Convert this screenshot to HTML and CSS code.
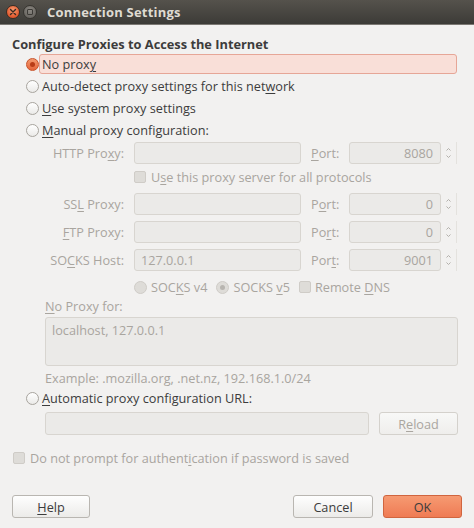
FILE: index.html
```html
<!DOCTYPE html>
<html>
<head>
<meta charset="utf-8">
<link rel="stylesheet" href="styles.css">
</head>
<body>
<div class="window">
  <div class="titlebar">
    <span class="wbtn close"><svg width="8" height="8" viewBox="0 0 8 8"><path d="M1.5 1.5L6.5 6.5M6.5 1.5L1.5 6.5" stroke="#3a2a22" stroke-width="1.4" stroke-linecap="round"/></svg></span>
    <span class="wbtn mini"><span class="mini-sq"></span></span>
    <span class="title">Connection Settings</span>
  </div>
  <div class="content">
    <div class="heading">Configure Proxies to Access the Internet</div>
    <div class="radio-row selected"><span class="radio checked"></span><span class="rlabel">No prox<u>y</u></span></div>
    <div class="radio-row"><span class="radio"></span><span class="rlabel">Auto-detect proxy settings for this net<u>w</u>ork</span></div>
    <div class="radio-row"><span class="radio"></span><span class="rlabel"><u>U</u>se system proxy settings</span></div>
    <div class="radio-row"><span class="radio"></span><span class="rlabel"><u>M</u>anual proxy configuration:</span></div>

    <div class="manual">
      <div class="prow">
        <span class="plabel">HTTP Pro<u>x</u>y:</span>
        <span class="field host"></span>
        <span class="portlabel"><u>P</u>ort:</span>
        <span class="field port">8080</span>
        <span class="spin"><svg width="7" height="16" viewBox="0 0 7 16"><path d="M1.5 5.5L3.5 3.5L5.5 5.5M1.5 10.5L3.5 12.5L5.5 10.5" fill="none" stroke="#b3b0ab" stroke-width="1"/></svg></span>
      </div>
      <div class="checkrow sub"><span class="check"></span><span>U<u>s</u>e this proxy server for all protocols</span></div>
      <div class="prow">
        <span class="plabel">SS<u>L</u> Proxy:</span>
        <span class="field host"></span>
        <span class="portlabel">P<u>o</u>rt:</span>
        <span class="field port">0</span>
        <span class="spin"><svg width="7" height="16" viewBox="0 0 7 16"><path d="M1.5 5.5L3.5 3.5L5.5 5.5M1.5 10.5L3.5 12.5L5.5 10.5" fill="none" stroke="#b3b0ab" stroke-width="1"/></svg></span>
      </div>
      <div class="prow">
        <span class="plabel"><u>F</u>TP Proxy:</span>
        <span class="field host"></span>
        <span class="portlabel">Po<u>r</u>t:</span>
        <span class="field port">0</span>
        <span class="spin"><svg width="7" height="16" viewBox="0 0 7 16"><path d="M1.5 5.5L3.5 3.5L5.5 5.5M1.5 10.5L3.5 12.5L5.5 10.5" fill="none" stroke="#b3b0ab" stroke-width="1"/></svg></span>
      </div>
      <div class="prow">
        <span class="plabel">SO<u>C</u>KS Host:</span>
        <span class="field host">127.0.0.1</span>
        <span class="portlabel">Por<u>t</u>:</span>
        <span class="field port">9001</span>
        <span class="spin"><svg width="7" height="16" viewBox="0 0 7 16"><path d="M1.5 5.5L3.5 3.5L5.5 5.5M1.5 10.5L3.5 12.5L5.5 10.5" fill="none" stroke="#b3b0ab" stroke-width="1"/></svg></span>
      </div>
      <div class="socksrow sub">
        <span class="opt"><span class="radio dis"></span><span>SOC<u>K</u>S v4</span></span>
        <span class="opt"><span class="radio dis dchecked"></span><span>SOCKS <u>v</u>5</span></span>
        <span class="opt"><span class="check"></span><span>Remote <u>D</u>NS</span></span>
      </div>
      <div class="noproxy-label"><u>N</u>o Proxy for:</div>
      <div class="textarea">localhost, 127.0.0.1</div>
      <div class="example">Example: .mozilla.org, .net.nz, 192.168.1.0/24</div>
    </div>

    <div class="radio-row auto"><span class="radio"></span><span class="rlabel"><u>A</u>utomatic proxy configuration URL:</span></div>
    <div class="urlrow">
      <span class="field url"></span>
      <span class="btn reload">R<u>e</u>load</span>
    </div>
    <div class="checkrow prompt"><span class="check"></span><span>Do not prompt for authent<u>i</u>cation if password is saved</span></div>

    <div class="buttons">
      <span class="btn help"><u>H</u>elp</span>
      <span class="spacer"></span>
      <span class="btn cancel">Cancel</span>
      <span class="btn ok">OK</span>
    </div>
  </div>
</div>
</body>
</html>
```
FILE: styles.css
```css
* { box-sizing: border-box; }
html, body { margin: 0; padding: 0; }
body {
  width: 474px;
  height: 528px;
  background: #f2f1f0;
  font-family: "Open Sans", "Noto Sans", sans-serif;
  font-size: 12.7px;
  color: #3c3c3c;
  overflow: hidden;
}
u { text-decoration: underline; text-underline-offset: 2px; text-decoration-thickness: 1px; }
.window { width: 474px; height: 528px; display: flex; flex-direction: column; }
.titlebar {
  height: 25px;
  flex: none;
  background: linear-gradient(#55524c, #3c3b37);
  border-bottom: 1px solid #7b7873;
  display: flex;
  align-items: center;
  padding-left: 6px;
}
.wbtn {
  width: 14px; height: 14px; border-radius: 50%;
  display: flex; align-items: center; justify-content: center;
  margin-right: 3px;
}
.close { background: radial-gradient(circle at 50% 35%, #f69a6f, #e2582d 70%); border: 1px solid #3a2d24; }
.mini { background: radial-gradient(circle at 50% 35%, #8a8781, #6b6863 70%); border: 1px solid #36342f; }
.mini-sq { width: 6px; height: 6px; border: 1px solid #3d3b37; border-radius: 1px; }
.title { margin-left: 7px; font-weight: bold; color: #dfdbd2; font-size: 13px; letter-spacing: 0.2px; }

.content { flex: 1; padding: 10px 12px 0 12px; display: flex; flex-direction: column; }
.heading { font-weight: bold; font-size: 12.8px; height: 18px; line-height: 18px; margin-bottom: 1px; }

.radio-row {
  height: 20px; display: flex; align-items: center;
  margin-left: 13px; margin-bottom: 2px;
  border: 1px solid transparent; border-radius: 3px;
}
.radio-row.selected { margin-left: 13px; margin-right: 4px; }
.radio-row.selected .rlabel {
  flex: 1; background: #f9dfd8; border: 1px solid #e6a697; border-radius: 3px;
  height: 20px; line-height: 18px; padding-left: 2px; margin-left: 0;
}
.rlabel { margin-left: 3px; line-height: 20px; white-space: nowrap; }
.radio {
  width: 13px; height: 13px; border-radius: 50%; flex: none;
  border: 1px solid #a8a49e;
  background: linear-gradient(#ffffff, #ebeae8);
  position: relative;
}
.radio.checked {
  border-color: #c8522a;
  background: linear-gradient(#f39a6f, #e6653a);
}
.radio.checked::after {
  content: ""; position: absolute; left: 3px; top: 3px;
  width: 5px; height: 5px; border-radius: 50%; background: #b83c16;
}
.radio.dis { border-color: #cfccc7; background: #dedcd8; }
.radio.dchecked::after {
  content: ""; position: absolute; left: 3px; top: 3px;
  width: 5px; height: 5px; border-radius: 50%; background: #b8b5b0;
}
.check {
  width: 12px; height: 12px; border: 1px solid #cfccc7; border-radius: 2px;
  background: #dedcd8; flex: none;
}

.manual { color: #a9a59f; display: flex; flex-direction: column; }
.prow { display: flex; align-items: center; height: 22px; margin-bottom: 6px; }
.plabel { width: 122px; text-align: right; padding-right: 10px; white-space: nowrap; }
.field {
  height: 22px; border: 1px solid #d8d5d0; border-radius: 3px;
  background: #ebeae8; line-height: 20px; padding: 0 6px; color: #a9a59f;
}
.host { width: 167px; }
.portlabel { width: 48px; padding-left: 10px; }
.port { width: 92px; text-align: right; padding-right: 7px; }
.spin {
  width: 16px; height: 22px; display: flex; align-items: center; justify-content: center;
  border-right: 1px solid #e4e2de;
}
.sub { margin-left: 122px; }
.checkrow { display: flex; align-items: center; height: 16px; gap: 5px; }
.manual .checkrow { margin-bottom: 8px; margin-top: -1px; }
.socksrow { display: flex; align-items: center; height: 16px; margin-top: 2px; }
.opt { display: flex; align-items: center; gap: 4px; margin-right: 9px; }
.noproxy-label { margin-left: 33px; margin-top: 2px; height: 18px; line-height: 18px; }
.textarea {
  margin-left: 33px; width: 413px; height: 49px; margin-top: 2px;
  border: 1px solid #d8d5d0; border-radius: 3px; background: #ebeae8;
  padding: 3px 6px;
}
.example { margin-left: 33px; height: 20px; line-height: 20px; margin-top: 2px; }
.radio-row.auto { margin-top: 0; }
.urlrow { display: flex; align-items: center; margin-left: 33px; margin-top: 2px; height: 23px; }
.url { width: 324px; height: 23px; }
.btn {
  display: flex; align-items: center; justify-content: center;
  height: 23px; border: 1px solid #b9b6b1; border-radius: 3px;
  background: linear-gradient(#fefefe, #ecebe9);
  color: #3c3c3c;
}
.reload { width: 79px; margin-left: 10px; color: #aaa6a0; border-color: #d4d1cc; background: linear-gradient(#f8f8f7, #efeeec); }
.prompt { margin-top: 15px; margin-left: 1px; color: #a9a59f; gap: 5px; }
.buttons { display: flex; margin-top: 29px; height: 24px; }
.help { width: 78px; }
.spacer { flex: 1; }
.cancel { width: 80px; margin-right: 10px; }
.ok {
  width: 79px; border-color: #d0653f;
  background: linear-gradient(#f69a72, #ef7b54);
}
```
